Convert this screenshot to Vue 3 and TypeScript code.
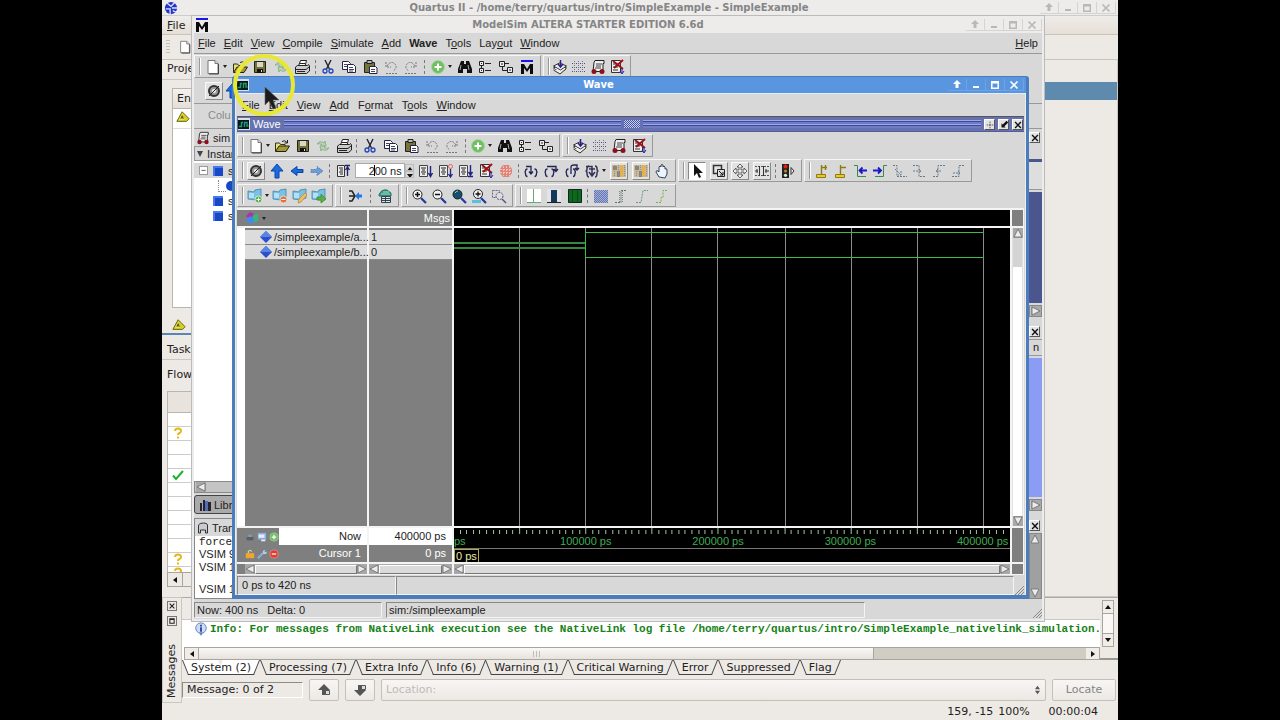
<script setup lang="ts">
interface Item {
  icon: string
  label?: string
  drop?: boolean
  raised?: boolean
  active?: boolean
}
interface Bar {
  width: number
  items: Item[]
}

const tool = (names: string): Item[] =>
  names.split(' ').map((name) => ({
    icon: name.replace(/[+^*]$/, ''),
    label: name.replace(/[+^*]$/, ''),
    drop: name.endsWith('+'),
    raised: name.endsWith('^'),
    active: name.endsWith('*'),
  }))

const standard = 'new+ open save refresh print | cut copy paste undo redo | add+ find collapse expand'
const compile = 'compile grid simulate stop'

const simBars: Bar[] = [
  { width: 347, items: tool(standard + ' modelsim') },
  { width: 88, items: tool(compile) },
]

const waveRows: Bar[][] = [
  [
    { width: 323, items: tool(standard) },
    { width: 91, items: tool(compile) },
  ],
  [
    {
      width: 439,
      items: tool('env^ up left right | restart field run runall runnext breakrun halt | stepin stepover stepout stepcur+ prof^ prof^ hand'),
    },
    { width: 124, items: tool('select* zoommode^ pan^ twocursor^ | traffic') },
    { width: 168, items: tool('cursoradd cursordel prevedge nextedge fallprev fallnext riseprev risenext') },
  ],
  [
    { width: 96, items: tool('groupadd+ groupdel groupedit groupgo') },
    { width: 64, items: tool('merge | export') },
    { width: 112, items: tool('zoomin zoomout zoomfull zoomcursor zoomrange') },
    { width: 161, items: tool('fmtline fmtbar fmtfull | hatch edgea edgeb edgec') },
  ],
]

const simMenu = ['File', 'Edit', 'View', 'Compile', 'Simulate', 'Add', 'Wave', 'Tools', 'Layout', 'Window']
const waveMenu = ['File', 'Edit', 'View', 'Add', 'Format', 'Tools', 'Window']
const underline: Record<string, number> = { Tools: 1, Format: 1, Layout: 3, Wave: -1 }
const split = (word: string): [string, string, string] => {
  const i = underline[word] ?? 0
  return i < 0 ? [word, '', ''] : [word.slice(0, i), word[i], word.slice(i + 1)]
}

const signals = [
  { name: '/simpleexample/a...', value: '1' },
  { name: '/simpleexample/b...', value: '0' },
]
const gridLines = Array.from({ length: 8 }, (_, i) => Math.round(66 * (i + 1) + i / 8))
const ticks = Array.from({ length: 84 }, (_, i) => ({ x: Math.round(6.61 * i) - 0.5, major: i % 10 === 0 }))
const times = ['100000 ps', '200000 ps', '300000 ps', '400000 ps']
const tabs = [
  'System (2)', 'Processing (7)', 'Extra Info', 'Info (6)', 'Warning (1)',
  'Critical Warning', 'Error', 'Suppressed', 'Flag',
]
const tasks = ['', 'ask', '', '', 'ok', '', '', '', '', '', 'ask', 'ask']
const winButtons = ['shade', 'min', 'max', 'close']
</script>

<template>
  <svg class="defs" aria-hidden="true">
    <defs>
      <symbol id="new" viewBox="0 0 16 16"><path d="M3 1.500h7l3 3v10H3z" fill="#fff" stroke="#777" /><path d="M10 1.500v3h3" fill="#ddd" stroke="#777" /><path d="M13.500 5v10H4" fill="none" stroke="#444" /></symbol>
      <symbol id="open" viewBox="0 0 16 16"><path d="M1.500 13V5h4l1 1.500H11V8" fill="#e8df80" stroke="#332" /><path d="M1.500 13.500L5 8h10.500L12 13.500z" fill="#a59a32" stroke="#221" /><path d="M8 3.500q3-2 5 1M13.500 2v3h-3" fill="none" stroke="#222" /></symbol>
      <symbol id="save" viewBox="0 0 16 16"><path d="M2.500 2.500h11v11h-11z" fill="#74743a" stroke="#221" /><path d="M5 3h6v5H5z" fill="#d8d8c8" /><path d="M5 10h6v4H5z" fill="#111" /><path d="M9 11h1v2H9z" fill="#ddd" /></symbol>
      <symbol id="refresh" viewBox="0 0 16 16"><path d="M2 6q3-4 7-1l1-2 1 5-5 0 1-1q-2-2-5-1z" fill="#b8d4b4" stroke="#8eb28c" /><path d="M14 10q-3 4-7 1l-1 2-1-5h5l-1 1q2 2 5 1z" fill="#b8d4b4" stroke="#8eb28c" /></symbol>
      <symbol id="print" viewBox="0 0 16 16"><path d="M4.500 7l2-5.500h6L11 7z" fill="#fff" stroke="#222" /><path d="M1.500 8l2-1.500h10l1-1 1 1.500v5l-3 2.500H1.500z" fill="#ccc" stroke="#222" /><path d="M2 10.500h10l3-2.500M6 4.500h5M3 12.500h8" fill="none" stroke="#222" /></symbol>
      <symbol id="cut" viewBox="0 0 16 16"><path d="M5 1l4.500 9M11 1L6.500 10" stroke="#223" stroke-width="1.400" fill="none" /><circle cx="5" cy="12" r="2" fill="none" stroke="#24b" stroke-width="1.300" /><circle cx="11" cy="12" r="2" fill="none" stroke="#24b" stroke-width="1.300" /></symbol>
      <symbol id="copy" viewBox="0 0 16 16"><path d="M1.500 2.500h6l2 2v6h-8z" fill="#fff" stroke="#224" /><path d="M6.500 5.500h6l2 2v6h-8z" fill="#fff" stroke="#224" /><path d="M3 5.500h3M3 7.500h3M8 8.500h4M8 10.500h5M8 12h4" stroke="#446" /></symbol>
      <symbol id="paste" viewBox="0 0 16 16"><path d="M2.500 3.500h10v10h-10z" fill="#77733a" stroke="#222" /><path d="M5 1.500h5v3H5z" fill="#bbb" stroke="#222" /><path d="M7.500 7.500h6l1.500 1.500v5.500H7.500z" fill="#fff" stroke="#224" /><path d="M9 10.500h4M9 12.500h4" stroke="#446" /></symbol>
      <symbol id="undo" viewBox="0 0 16 16"><path d="M3 3v5h5M4 7q4-6 8-2 3 4-2 7" fill="none" stroke="#777" stroke-dasharray="2 1" /><path d="M3 14.500h11" stroke="#777" stroke-dasharray="2 1" /></symbol>
      <symbol id="redo" viewBox="0 0 16 16"><path d="M13 3v5H8M12 7Q8 1 4 5q-3 4 2 7" fill="none" stroke="#777" stroke-dasharray="2 1" /><path d="M2 14.500h11" stroke="#777" stroke-dasharray="2 1" /></symbol>
      <symbol id="add" viewBox="0 0 16 16"><circle cx="8" cy="8" r="6.500" fill="#6fbf62" stroke="#a8d8a0" /><path d="M8 4.500v7M4.500 8h7" stroke="#fff" stroke-width="2" /></symbol>
      <symbol id="find" viewBox="0 0 16 16"><path d="M4 2h3v3h2V2h3l3 8v4h-5v-4H6v4H1v-4z" fill="#111" /><path d="M4 6l-1 5M11 6l1 5" stroke="#aaa" /></symbol>
      <symbol id="collapse" viewBox="0 0 16 16"><path d="M2.500 2.500h4v4h-4zM2.500 9.500h4v4h-4z" fill="#eee" stroke="#222" /><path d="M4 4.500h1M4 11.500h1M8 4.500h6M8 11.500h6M4.500 6v4" stroke="#222" /></symbol>
      <symbol id="expand" viewBox="0 0 16 16"><path d="M1.500 2.500h5v5h-5zM9.500 8.500h5v5h-5z" fill="#eee" stroke="#222" /><path d="M3 5h2M7 4.500h4M4.500 8v3.500H9M11 11h2" stroke="#222" fill="none" /></symbol>
      <symbol id="modelsim" viewBox="0 0 16 16"><path d="M2 1h12v2H2z" fill="#1616e8" /><path d="M2 5h3l3 5 3-5h3v10h-3V9l-3 4-3-4v6H2z" fill="#0a0a0a" /></symbol>
      <symbol id="compile" viewBox="0 0 16 16"><path d="M1.500 9l6-3 7 3-6 5z" fill="#fff" stroke="#333" /><path d="M1.500 7l6-3 7 3-6 4zM1.500 11l6.500 4 6-5" fill="#eee" stroke="#333" /><path d="M8.500 1v6M6 5l2.500 3L11 5" fill="none" stroke="#228" stroke-width="1.500" /></symbol>
      <symbol id="grid" viewBox="0 0 16 16"><path d="M1 4.500h14M1 8.500h14M1 12.500h14" stroke="#44a" stroke-dasharray="1 1" /><path d="M3.500 2v12M7.500 2v12M11.500 2v12" stroke="#777" stroke-dasharray="1 1" /></symbol>
      <symbol id="simulate" viewBox="0 0 16 16"><path d="M5 1.500h9v3h-1v8H3l1-9z" fill="#eee" stroke="#222" /><path d="M6 5h6M6 7h5M5 9h6" stroke="#444" /><circle cx="4" cy="12.500" r="2.500" fill="#8a1220" /><circle cx="12" cy="12.500" r="2.500" fill="#8a1220" /></symbol>
      <symbol id="stop" viewBox="0 0 16 16"><path d="M2.500 1.500h9v12h-9z" fill="#eee" stroke="#333" /><path d="M4 5h5M4 8h5M4 11h5" stroke="#333" /><path d="M4 2l10 8M14 1L5 9" stroke="#a01018" stroke-width="2" /><path d="M13 9v5M11 12l2 3 2-3" stroke="#22a" fill="none" /></symbol>
      <symbol id="env" viewBox="0 0 16 16"><circle cx="8" cy="8" r="5" fill="#999" stroke="#333" stroke-width="2" /><circle cx="8" cy="8" r="2" fill="#eee" /><path d="M3 13L13 3" stroke="#222" /></symbol>
      <symbol id="up" viewBox="0 0 16 16"><path d="M8 1l6 7h-4v7H6V8H2z" fill="#1a6ae0" stroke="#0b45a8" /></symbol>
      <symbol id="left" viewBox="0 0 16 16"><path d="M2 8l6-4.500v3h6v3H8v3z" fill="#1a6ae0" stroke="#0b45a8" /></symbol>
      <symbol id="right" viewBox="0 0 16 16"><path d="M14 8L8 3.500v3H2v3h6v3z" fill="#6b9ed6" stroke="#5580ba" stroke-dasharray="2 1" /></symbol>
      <symbol id="restart" viewBox="0 0 16 16"><path d="M2.500 2.500h7v11h-7z" fill="#eee" stroke="#333" /><path d="M4 5h4M5 7h3M4 9h4M5 11h3" stroke="#222" /><path d="M10 2.500h5M12.500 13V4M10.500 7l2-3 2 3" fill="none" stroke="#226" stroke-width="1.300" /></symbol>
      <symbol id="run" viewBox="0 0 16 16"><path d="M1.500 2.500h8v11h-8z" fill="#eee" stroke="#444" /><path d="M3 5h5M4 7h3M3 9h5M4 11h3" stroke="#222" /><path d="M12.500 3v10M10.500 10l2 3.500 2-3.500" fill="none" stroke="#228" stroke-width="1.400" /></symbol>
      <symbol id="runall" viewBox="0 0 16 16"><path d="M1.500 2.500h8v11h-8z" fill="#eee" stroke="#444" /><path d="M3 5h5M4 7h3M3 9h5M4 11h3" stroke="#222" /><path d="M12.500 6v8M10.500 11l2 3 2-3" fill="none" stroke="#228" stroke-width="1.300" /><circle cx="12.500" cy="3.500" r="2" fill="none" stroke="#d66" /></symbol>
      <symbol id="runnext" viewBox="0 0 16 16"><path d="M1.500 2.500h8v11h-8z" fill="#eee" stroke="#444" /><path d="M3 5h5M4 7h3M3 9h5M4 11h3" stroke="#222" /><path d="M12.500 2v9M10.500 9l2 3 2-3M10 13.500h5" fill="none" stroke="#228" stroke-width="1.400" /></symbol>
      <symbol id="breakrun" viewBox="0 0 16 16"><path d="M2.500 1.500h9v12h-9z" fill="#eee" stroke="#333" /><path d="M4 5h5M4 8h5M4 11h5" stroke="#333" /><path d="M4 2l10 8M14 1L5 9" stroke="#a01018" stroke-width="2" /><path d="M13 9v5M11 12l2 3 2-3" stroke="#22a" fill="none" /></symbol>
      <symbol id="halt" viewBox="0 0 16 16"><path d="M5 2h6l3 4v4l-3 4H5l-3-4V6z" fill="#e08478" /><path d="M2 6.500h12M2 9.500h12M5.500 3v10M8.500 3v10M11.500 3v10" stroke="#f4c4bc" stroke-dasharray="2 1" /></symbol>
      <symbol id="stepin" viewBox="0 0 16 16"><path d="M4.500 6q-2 0-2 2 0 1-1 1 1 0 1 1.500 0 3 2 3M11.500 6q2 0 2 2 0 1 1 1-1 0-1 1.500 0 3-2 3M3 3.500h5V11M6 8.500L8 11l2-2.500" fill="none" stroke="#225" stroke-width="1.300" /></symbol>
      <symbol id="stepover" viewBox="0 0 16 16"><path d="M4.500 6q-2 0-2 2 0 1-1 1 1 0 1 1.500 0 3 2 3M8.500 6q2 0 2 2 0 1 1 1-1 0-1 1.500 0 3-2 3M4 3.500h9V8M11 6l2 2.500L15 6" fill="none" stroke="#225" stroke-width="1.300" /></symbol>
      <symbol id="stepout" viewBox="0 0 16 16"><path d="M4.500 6q-2 0-2 2 0 1-1 1 1 0 1 1.500 0 3 2 3M9 6q2 0 2 2 0 1 1 1-1 0-1 1.500 0 3-2 3M7 11V4q0-2 3-2h3v4M11 5l2 2 2-2" fill="none" stroke="#225" stroke-width="1.300" /></symbol>
      <symbol id="stepcur" viewBox="0 0 16 16"><path d="M5 3q-2 0-2 3 0 2-1.500 2 1.500 0 1.500 2 0 4 2 4M11 3q2 0 2 3 0 2 1.500 2-1.500 0-1.500 2 0 4-2 4M2 3.500h6V12M5 9l3 4 3-4M5 6h6" fill="none" stroke="#335" stroke-width="1.500" /></symbol>
      <symbol id="prof" viewBox="0 0 16 16"><path d="M1 2h14v12H1z" fill="#c8b998" /><path d="M2 3h4v4H2zM6 8h3v6H6z" fill="#8a8475" /><path d="M9 2h3v12H9z" fill="#e8b048" /><path d="M3.500 2v12M7.500 2v12M13.500 2v12" stroke="#8d8d98" stroke-dasharray="1 1" /></symbol>
      <symbol id="hand" viewBox="0 0 16 16"><path d="M5 14L2 9q0-2 2-1l1 1V4q1-2 2 0V2q1-1 2 0v2q1-2 2 0v2q2-1 2 1v4l-2 4z" fill="#eef4ff" stroke="#345" /></symbol>
      <symbol id="select" viewBox="0 0 16 16"><path d="M5 1v12l3-3 2 5 2-1-2-4h4z" fill="#111" /></symbol>
      <symbol id="zoommode" viewBox="0 0 16 16"><path d="M2.500 2.500h8v8h-8z" fill="none" stroke="#333" stroke-width="1.500" /><path d="M6.500 6.500h7v7h-7z" fill="#ddd" stroke="#222" /><path d="M8 8l4 4M12 9v3H9" stroke="#111" fill="none" /></symbol>
      <symbol id="pan" viewBox="0 0 16 16"><path d="M8 1l3 3H9v3h3V5l3 3-3 3V9H9v3h2l-3 3-3-3h2V9H4v2L1 8l3-3v2h3V4H5z" fill="#eee" stroke="#444" stroke-width=".8" /></symbol>
      <symbol id="twocursor" viewBox="0 0 16 16"><path d="M1 3.500h14M1 12.500h14" stroke="#555" stroke-dasharray="2 1" /><path d="M5.500 3v10M9.500 3v10M1 8h3M11 8h4M3 6v4M12 6v4" stroke="#333" fill="none" /></symbol>
      <symbol id="traffic" viewBox="0 0 16 16"><path d="M2 1h7v14H2z" fill="#222" /><circle cx="5.500" cy="3.500" r="2" fill="#f01818" /><circle cx="5.500" cy="8" r="1.500" fill="#b09018" /><circle cx="5.500" cy="12.300" r="1.600" fill="#d8f0d8" /><path d="M11 4.500l3 3.500-3 3.500z" fill="#eee" stroke="#333" /></symbol>
      <symbol id="cursoradd" viewBox="0 0 16 16"><path d="M7.500 2v9M7 4.500h6M11.500 2v5" fill="none" stroke="#8f7a10" stroke-width="1.400" /><path d="M2.500 11.500h9v3h-9z" fill="#ecc830" stroke="#8f7a10" /></symbol>
      <symbol id="cursordel" viewBox="0 0 16 16"><path d="M7.500 2v9M8 4.500h5" fill="none" stroke="#8f7a10" stroke-width="1.400" /><path d="M2.500 11.500h9v3h-9z" fill="#ecc830" stroke="#8f7a10" /></symbol>
      <symbol id="prevedge" viewBox="0 0 16 16"><path d="M1 2.500h3.500v11H13" fill="none" stroke="#3a8a4a" /><path d="M6 7.500h8M9.500 4.500l-3 3 3 3" fill="none" stroke="#1818c8" stroke-width="1.800" /></symbol>
      <symbol id="nextedge" viewBox="0 0 16 16"><path d="M15 2.500h-3.500v11H3" fill="none" stroke="#3a8a4a" /><path d="M1 7.500h8M6 4.500l3 3-3 3" fill="none" stroke="#1818c8" stroke-width="1.800" /></symbol>
      <symbol id="fallprev" viewBox="0 0 16 16"><path d="M1 2.500h4v11h10M3 6l6 6M9 8v4H6" fill="none" stroke="#667a88" stroke-dasharray="2 1" /></symbol>
      <symbol id="fallnext" viewBox="0 0 16 16"><path d="M2 2.500h6v11h7M2 8h8M8 6l2 2-2 2" fill="none" stroke="#667a88" stroke-dasharray="2 1" /></symbol>
      <symbol id="riseprev" viewBox="0 0 16 16"><path d="M2 13.500h5v-11h7M5 8h6M7 6L5 8l2 2" fill="none" stroke="#667a88" stroke-dasharray="2 1" /></symbol>
      <symbol id="risenext" viewBox="0 0 16 16"><path d="M2 13.500h7v-11h5M3 10h7M8 8l2 2-2 2" fill="none" stroke="#667a88" stroke-dasharray="2 1" /></symbol>
      <symbol id="folder" viewBox="0 0 16 16"><path d="M1 3l6 1 1-2 6-1v9l-5 2-8-1z" fill="#7cc0e4" stroke="#3a86b4" stroke-width=".8" /><path d="M2 5h5v5H2z" fill="#b4e0f4" /></symbol>
      <symbol id="groupadd" viewBox="0 0 16 16"><use href="#folder" /><circle cx="11.500" cy="11.500" r="3.500" fill="#58b04a" stroke="#e8f4e4" stroke-width=".8" /><path d="M11.500 9.500v4M9.500 11.500h4" stroke="#fff" /></symbol>
      <symbol id="groupdel" viewBox="0 0 16 16"><use href="#folder" /><circle cx="11.500" cy="11.500" r="3.500" fill="#e0713c" stroke="#f4e4e0" stroke-width=".8" /><path d="M9.500 11.500h4" stroke="#fff" /></symbol>
      <symbol id="groupedit" viewBox="0 0 16 16"><use href="#folder" /><path d="M6 15l1-4 6-6 2 2-6 7z" fill="#f0c060" stroke="#b98a3c" stroke-width=".8" /></symbol>
      <symbol id="groupgo" viewBox="0 0 16 16"><use href="#folder" /><path d="M6 9h4V6l5 5-5 4v-3H6z" fill="#58b04a" stroke="#3c8a30" stroke-width=".8" /></symbol>
      <symbol id="merge" viewBox="0 0 16 16"><path d="M2 3h3l3 5-3 5H2M2 8h5" fill="none" stroke="#222" stroke-width="1.500" /><path d="M8 8l4-4v2.500h3v3h-3V12z" fill="#2476e4" /></symbol>
      <symbol id="export" viewBox="0 0 16 16"><path d="M2 7q2-6 8-5l4 3v3H2z" fill="#3d9b8c" stroke="#2b6f66" /><path d="M4 6h9M6 4h6" stroke="#a0d8c8" /><path d="M4.500 8.500h9v6h-9z" fill="#dfe8e8" stroke="#344" /><path d="M5 10.500h9M5 12.500h9M8.500 8v6" stroke="#345" /></symbol>
      <symbol id="zoomin" viewBox="0 0 16 16"><path d="M10 10l5 5" stroke="#2438a0" stroke-width="2.200" /><circle cx="6.500" cy="6.500" r="4.500" fill="#f2f2f2" stroke="#222" /><path d="M4 6.500h5M6.500 4v5" stroke="#111" stroke-width="1.500" /></symbol>
      <symbol id="zoomout" viewBox="0 0 16 16"><path d="M10 10l5 5" stroke="#2438a0" stroke-width="2.200" /><circle cx="6.500" cy="6.500" r="4.500" fill="#f2f2f2" stroke="#222" /><path d="M4 6.500h5" stroke="#111" stroke-width="1.500" /></symbol>
      <symbol id="zoomfull" viewBox="0 0 16 16"><path d="M10 10l5 5" stroke="#2438a0" stroke-width="2.200" /><circle cx="6.500" cy="6.500" r="4.500" fill="#17506c" stroke="#122" /><path d="M4 5q1-2 3-2" stroke="#9cd" fill="none" /></symbol>
      <symbol id="zoomcursor" viewBox="0 0 16 16"><path d="M1 13.500h9" stroke="#5ac0e0" stroke-width="3" /><path d="M10 10l5 5" stroke="#2438a0" stroke-width="2.200" /><circle cx="7" cy="6" r="4.500" fill="#f2f2f2" stroke="#222" /><path d="M4.500 6h5M7 3.500v5" stroke="#111" stroke-width="1.300" /></symbol>
      <symbol id="zoomrange" viewBox="0 0 16 16"><path d="M1.500 2.500h7v7h-7z" fill="none" stroke="#668" stroke-dasharray="2 1" /><circle cx="8.500" cy="8" r="3.500" fill="#ddd" stroke="#557" stroke-dasharray="2 1" /><path d="M11 11l4 4" stroke="#557" stroke-width="1.500" /></symbol>
      <symbol id="fmtline" viewBox="0 0 16 16"><path d="M1 1h14v14H1z" fill="#fff" /><path d="M1 14.500h14M7.500 1v13" stroke="#69a878" /></symbol>
      <symbol id="fmtbar" viewBox="0 0 16 16"><path d="M1 1h14v14H1z" fill="#e4e4e8" /><path d="M5 2h6v12H5z" fill="#14385c" /><path d="M1 14.500h14" stroke="#222" /></symbol>
      <symbol id="fmtfull" viewBox="0 0 16 16"><path d="M1.500 1.500h13v13h-13z" fill="#0d6a1c" stroke="#123" /><path d="M5.500 2v12M10.500 2v12" stroke="#084a10" /></symbol>
      <pattern id="dots" width="2" height="2" patternUnits="userSpaceOnUse"><path d="M0 0h1v1H0zM1 1h1v1H1z" fill="#6478b4" /></pattern>
      <symbol id="hatch" viewBox="0 0 16 16"><path d="M1 2h14v13H1z" fill="#a4aed4" /><path d="M1 2h14v13H1z" fill="url(#dots)" /></symbol>
      <symbol id="edgea" viewBox="0 0 16 16"><path d="M2 14.500h6v-12h5" fill="none" stroke="#567a60" stroke-dasharray="2 1" /><path d="M6.500 3v11M9.500 3v11" stroke="#888" stroke-dasharray="1 1" /></symbol>
      <symbol id="edgeb" viewBox="0 0 16 16"><path d="M2 14.500h5l2-12h5" fill="none" stroke="#6a9a7a" stroke-dasharray="2 1" /></symbol>
      <symbol id="edgec" viewBox="0 0 16 16"><path d="M2 14.500h5v-5h2v-7h5" fill="none" stroke="#7ab040" stroke-dasharray="2 1" /></symbol>
      <symbol id="shade" viewBox="0 0 12 12"><path d="M6 1l4 4H7.500v4h-3V5H2z" fill="currentColor" /></symbol>
      <symbol id="min" viewBox="0 0 12 12"><path d="M3 7h6v2H3z" fill="currentColor" /></symbol>
      <symbol id="max" viewBox="0 0 12 12"><path d="M2 2h8v8H2zM3.500 4.500v4h5v-4z" fill="currentColor" fill-rule="evenodd" /></symbol>
      <symbol id="close" viewBox="0 0 12 12"><path d="M2.500 2.500l7 7M9.500 2.500l-7 7" stroke="currentColor" stroke-width="1.700" /></symbol>
      <symbol id="dock" viewBox="0 0 12 12"><path d="M3 9V4l1.500 1.500L9 1l2 2-4.500 4.500L8 9z" fill="#111" /></symbol>
      <symbol id="plus" viewBox="0 0 12 12"><path d="M6 2v8M2 6h8" stroke="#444" stroke-dasharray="2 1" /></symbol>
      <symbol id="waveapp" viewBox="0 0 12 12"><path d="M0 0h12v12H0z" fill="#dde" /><path d="M0 2h11v9H0z" fill="#061a16" /><path d="M1 8.500h2.500v-4H5M6.500 9V4.500H9V8h1.500" fill="none" stroke="#1e9a74" stroke-width="1.400" /></symbol>
      <symbol id="warn" viewBox="0 0 16 16"><path d="M7 2L1 13h11l3-3z" fill="#d8d020" stroke="#5c5810" /><path d="M7 4.500L3.500 11h6z" fill="#f0ec48" /><path d="M5.500 10L7 6.500l1.500 3.500M6 9h2" fill="none" stroke="#333" stroke-width=".9" /></symbol>
      <symbol id="ask" viewBox="0 0 12 12"><path d="M3 4q0-2.500 3-2.500T9 4q0 1.500-1.500 2T6 8" fill="none" stroke="#e4b818" stroke-width="2" /><path d="M5 9.500h2v2H5z" fill="#e4b818" /></symbol>
      <symbol id="ok" viewBox="0 0 12 12"><path d="M1 6.500l3 3.500 7-8" fill="none" stroke="#22b030" stroke-width="2" /></symbol>
      <symbol id="info" viewBox="0 0 16 16"><circle cx="8" cy="7" r="6" fill="#cfdcf2" stroke="#5878b8" /><path d="M6 12l2 4 2-4z" fill="#5878b8" /><path d="M7 6h2v5H7zM7 3h2v2H7z" fill="#1c3f98" /></symbol>
      <symbol id="diamond" viewBox="0 0 12 12"><path d="M6 0l6 6-6 6-6-6z" fill="#2a50cc" /><path d="M6 0l6 6H0z" fill="#5b82e4" /></symbol>
      <symbol id="cubes" viewBox="0 0 14 12"><path d="M1 4l4-4 4 2-4 6z" fill="#b030a8" /><path d="M8 3l5-1v7l-5 1z" fill="#38b878" /><path d="M5 4l5 4-4 4-5-4z" fill="#3a8cf4" /></symbol>
      <symbol id="lib" viewBox="0 0 12 12"><path d="M1 4h2v8H1zM4 1h2v11H4zM9 3h3v9H9z" fill="#223" /><path d="M6 2h3v10H6z" fill="#556cb0" /></symbol>
      <symbol id="transcript" viewBox="0 0 12 12"><path d="M1.500 11V3q1-2 5-2t4 2v8h-2V8h-5v3z" fill="#c8ccd0" stroke="#333" /></symbol>
      <symbol id="sq" viewBox="0 0 10 10"><path d="M0 0h10v10H0z" fill="#1748c8" /><path d="M0 0h10v2H2v8H0z" fill="#4a78ea" /></symbol>
      <symbol id="quartus" viewBox="0 0 16 16"><circle cx="8" cy="8" r="7" fill="#2334c8" /><path d="M3 2l5 4 5-5M2 9h5v6M9 8h6M10 11l4 2" fill="none" stroke="#dfe2f8" stroke-width="1.500" /></symbol>
      <symbol id="snap" viewBox="0 0 12 12"><path d="M2 6h8v4H2z" fill="#55606c" /><path d="M4 3h4v3H4z" fill="#8b98a8" /></symbol>
      <symbol id="screen" viewBox="0 0 12 12"><path d="M1 1h10v8H1z" fill="#8cb0e4" /><path d="M2 3h7v4H2zM5 9h5v2H5z" fill="#e8f0fc" /></symbol>
      <symbol id="lock" viewBox="0 0 12 12"><path d="M4 5V3q2-3 4 0" fill="none" stroke="#e8d8a0" stroke-width="1.400" /><path d="M1 5h10v6H1z" fill="#f0a828" /></symbol>
      <symbol id="wrench" viewBox="0 0 12 12"><path d="M1 11l6-6" stroke="#88aee4" stroke-width="2.500" /><path d="M7 2l3-1-1 2 1 1 2-1-1 3-4 0z" fill="#b4ccf0" /></symbol>
      <symbol id="minus" viewBox="0 0 16 16"><circle cx="8" cy="8" r="6.500" fill="#e03c34" stroke="#f09890" /><path d="M4.500 8h7" stroke="#fff" stroke-width="2" /></symbol>
      <symbol id="tri" viewBox="0 0 10 10"><path d="M0 0h10v10H0z" fill="#a8a8a8" /><path d="M9 1v8L1 5z" fill="#ececec" stroke="#666" stroke-width=".8" /></symbol>
      <symbol id="tinytri" viewBox="0 0 8 8"><path d="M6 1v6L2 4z" fill="#111" /></symbol>
      <symbol id="grip" viewBox="0 0 10 10"><path d="M1 10l9-9M4 10l6-6M7 10l3-3" stroke="#888" /></symbol>
      <symbol id="arrowmsg" viewBox="0 0 16 16"><path d="M8 2l6 6h-3v5h-5V8H2z" fill="#555" /><path d="M9.500 8.500h4v4h-4z" fill="#ddd" stroke="#555" /></symbol>
    </defs>
  </svg>

  <main class="desktop">
    <div class="screen">
      <section class="quartus">
        <header class="title pale">
          <svg class="i14"><use href="#quartus" /></svg>
          <h1>Quartus II - /home/terry/quartus/intro/SimpleExample - SimpleExample</h1>
          <span class="winbtns">
            <button v-for="b in winButtons" :key="b" :aria-label="b"><svg class="i12"><use :href="'#' + b" /></svg></button>
          </span>
        </header>
        <nav class="qmenu"><button><u>F</u>ile</button></nav>
        <div class="qtools"><i class="handle"></i><button aria-label="new file"><svg class="i14"><use href="#new" /></svg></button></div>
        <div class="qmain">
          <aside class="qleft">
            <h2>Proje</h2>
            <div class="entity">
              <div class="enthead">En</div>
              <div class="entrow"><svg class="i14"><use href="#warn" /></svg></div>
              <div class="entbody"></div>
            </div>
            <div class="hier"><svg class="i14"><use href="#warn" /></svg></div>
            <h2 class="tasktitle">Task</h2>
            <div class="flow">Flow</div>
            <div class="tasks">
              <div class="taskhead"></div>
              <div v-for="(t, i) in tasks" :key="i" class="task"><svg v-if="t" class="i12"><use :href="'#' + t" /></svg></div>
            </div>
            <div class="qscroll"><button aria-label="scroll left"><svg class="i8"><use href="#tinytri" /></svg></button></div>
          </aside>
          <div class="qright"><div class="qband"></div></div>
        </div>
        <section class="messages">
          <aside class="msgside">
            <button aria-label="close messages"><svg class="i8"><use href="#close" /></svg></button>
            <button aria-label="float messages"><svg class="i8"><use href="#max" /></svg></button>
            <span>Messages</span>
          </aside>
          <div class="msgmain">
            <div class="msgbox">
              <div class="msghead"></div>
              <div class="msgview">
                <div class="msgtext"><i class="branch"></i><svg class="i14"><use href="#info" /></svg><code>Info: For messages from NativeLink execution see the NativeLink log file /home/terry/quartus/intro/SimpleExample_nativelink_simulation.</code></div>
                <div class="hbar">
                  <button aria-label="scroll left"><svg class="i8"><use href="#tinytri" /></svg></button>
                  <div class="thumb"><i></i></div><div class="trough"></div>
                  <button aria-label="scroll right"><svg class="i8 flip"><use href="#tinytri" /></svg></button>
                </div>
              </div>
              <div class="vbar">
                <button aria-label="scroll up"><svg class="i8 r90"><use href="#tinytri" /></svg></button>
                <div class="vthumb"></div>
                <button aria-label="scroll down"><svg class="i8 r270"><use href="#tinytri" /></svg></button>
              </div>
            </div>
            <div class="tabs" role="tablist">
              <button v-for="(t, i) in tabs" :key="t" role="tab" :class="{ on: i === 0 }"><span>{{ t }}</span></button>
            </div>
            <div class="msgctl">
              <output>Message: 0 of 2</output>
              <button class="soft" aria-label="previous message"><svg class="i16"><use href="#arrowmsg" /></svg></button>
              <button class="soft" aria-label="next message"><svg class="i16 upside"><use href="#arrowmsg" /></svg></button>
              <div class="combo">
                <select aria-label="Location" disabled><option>Location:</option></select>
                <svg class="updown" viewBox="0 0 8 12"><path d="M1 5l3-4 3 4zM1 7l3 4 3-4z" fill="#555" /></svg>
              </div>
              <button class="soft locate">Locate</button>
            </div>
          </div>
        </section>
        <footer class="qstatus"><span>159, -15</span><span class="pct">100%</span><span class="clock">00:00:04</span></footer>
      </section>

      <section class="sim">
        <header class="title pale">
          <svg class="i16"><use href="#modelsim" /></svg>
          <h2>ModelSim ALTERA STARTER EDITION 6.6d</h2>
          <span class="winbtns"><button v-for="b in winButtons" :key="b" :aria-label="b"><svg class="i12"><use :href="'#' + b" /></svg></button></span>
        </header>
        <nav class="menu simmenu">
          <button v-for="m in simMenu" :key="m" :class="{ bold: m === 'Wave' }">{{ split(m)[0] }}<u>{{ split(m)[1] }}</u>{{ split(m)[2] }}</button>
          <button class="help"><u>H</u>elp</button>
        </nav>
        <div class="barrow simrow">
          <div v-for="(bar, k) in simBars" :key="k" class="bar" :style="{ width: bar.width + 'px' }">
            <template v-for="(it, j) in bar.items" :key="j">
              <i v-if="it.icon === '|'" class="sep"></i>
              <button v-else class="tool" :aria-label="it.label"><svg class="i16"><use :href="'#' + it.icon" /></svg><i v-if="it.drop" class="drop"></i></button>
            </template>
          </div>
        </div>
        <div class="simsecond"><button class="tool raised" aria-label="environment"><svg class="i16"><use href="#env" /></svg></button><button class="tool" aria-label="up"><svg class="i16"><use href="#up" /></svg></button></div>
        <div class="simthird">Colu</div>
        <div class="simbody">
          <aside class="simleft">
            <div class="panetitle"><svg class="i14"><use href="#simulate" /></svg>sim</div>
            <div class="inst"><span class="caret"></span><b>Instar</b></div>
            <div class="tree">
              <div class="node lit"><i class="fold">−</i><svg class="i10"><use href="#sq" /></svg><span>s</span></div>
              <div class="node sub"><i class="elbow"></i><i class="ball"></i></div>
              <div class="node deep"><svg class="i10"><use href="#sq" /></svg><span>s</span></div>
              <div class="node deep"><svg class="i10"><use href="#sq" /></svg><span>s</span></div>
            </div>
            <div class="mscroll"><svg class="i10"><use href="#tri" /></svg></div>
            <div class="libtab"><svg class="i12"><use href="#lib" /></svg>Libr</div>
            <div class="trans">
              <div class="panetitle"><svg class="i12"><use href="#transcript" /></svg>Tran</div>
              <div class="log"><code>force</code><span>VSIM 9</span><span>VSIM 1</span><span class="last">VSIM 1</span></div>
            </div>
          </aside>
          <aside class="simright">
            <button class="x" aria-label="close pane"><svg class="i10"><use href="#close" /></svg></button>
            <div class="strip"></div>
            <div class="navy"></div>
            <div class="mscroll"><svg class="i10 flip"><use href="#tri" /></svg></div>
            <button class="x" aria-label="close objects"><svg class="i10"><use href="#close" /></svg></button>
            <div class="n">n</div>
            <div class="peri"></div>
            <div class="mscroll"><svg class="i10 flip"><use href="#tri" /></svg></div>
            <button class="x" aria-label="close transcript"><svg class="i10"><use href="#close" /></svg></button>
            <div class="vmotif"><svg class="i10 r90"><use href="#tri" /></svg><svg class="i10 r270"><use href="#tri" /></svg></div>
          </aside>
        </div>
        <footer class="simstatus"><span class="cell now">Now: 400 ns&nbsp;&nbsp; Delta: 0</span><span class="cell path">sim:/simpleexample</span><svg class="i10"><use href="#grip" /></svg></footer>
      </section>

      <section class="wave">
        <header class="title blue">
          <svg class="i12"><use href="#waveapp" /></svg>
          <h2>Wave</h2>
          <span class="winbtns"><button v-for="b in winButtons" :key="b" :aria-label="b"><svg class="i12"><use :href="'#' + b" /></svg></button></span>
        </header>
        <div class="waveinner">
          <nav class="menu wavemenu">
            <button v-for="m in waveMenu" :key="m">{{ split(m)[0] }}<u>{{ split(m)[1] }}</u>{{ split(m)[2] }}</button>
          </nav>
          <div class="panebar">
            <svg class="i12"><use href="#waveapp" /></svg><span>Wave</span>
            <i class="stripes"></i><i class="knurl"></i><i class="stripes"></i>
            <button class="x" aria-label="zoom pane"><svg class="i10"><use href="#plus" /></svg></button>
            <button class="x" aria-label="dock pane"><svg class="i10"><use href="#dock" /></svg></button>
            <button class="x" aria-label="close pane"><svg class="i10"><use href="#close" /></svg></button>
          </div>
          <div class="rows">
            <div v-for="(row, r) in waveRows" :key="r" class="barrow">
              <div v-for="(bar, k) in row" :key="k" class="bar" :style="{ width: bar.width + 'px' }">
                <template v-for="(it, j) in bar.items" :key="j">
                  <i v-if="it.icon === '|'" class="sep"></i>
                  <span v-else-if="it.icon === 'field'" class="field">
                    <input type="text" value="200 ns" aria-label="Run length" />
                    <span class="spin"><button aria-label="increase"><svg class="i8 r90"><use href="#tinytri" /></svg></button><button aria-label="decrease"><svg class="i8 r270"><use href="#tinytri" /></svg></button></span>
                  </span>
                  <button v-else class="tool" :class="{ raised: it.raised, active: it.active }" :aria-label="it.label"><svg class="i16"><use :href="'#' + it.icon" /></svg><i v-if="it.drop" class="drop"></i></button>
                </template>
              </div>
            </div>
          </div>

          <div class="pane">
            <div class="gray head"><svg class="cubes"><use href="#cubes" /></svg><i class="drop"></i></div>
            <div class="gray head end">Msgs</div>
            <div class="black"></div>
            <div class="gray"></div>

            <div class="gray names"><div v-for="s in signals" :key="s.name" class="sig"><svg class="i12"><use href="#diamond" /></svg>{{ s.name }}</div></div>
            <div class="gray vals"><div v-for="s in signals" :key="s.name" class="sig">{{ s.value }}</div></div>
            <div class="black plot">
              <svg viewBox="0 0 555 298" preserveAspectRatio="none" shape-rendering="crispEdges" role="img" aria-label="waveforms">
                <path v-for="x in gridLines" :key="x" :d="`M${x - 0.5} 0V298`" stroke="#8c8c8c" />
                <path d="M0 14.500H131M0 19.500H131" stroke="#3a8640" stroke-width="2" />
                <path d="M528 4.500H131.500V29.500H528" stroke="#34c048" fill="none" />
              </svg>
            </div>
            <div class="vmotif wide"><svg class="i10 r90"><use href="#tri" /></svg><i></i><svg class="i10 r270"><use href="#tri" /></svg></div>

            <div class="gray foot">
              <div class="frow"><span class="ficons"><svg class="i10"><use href="#snap" /></svg><svg class="i10"><use href="#screen" /></svg><svg class="i10"><use href="#add" /></svg></span><span class="white">Now</span></div>
              <div class="frow"><span class="ficons"><svg class="i10"><use href="#lock" /></svg><svg class="i10"><use href="#wrench" /></svg><svg class="i10"><use href="#minus" /></svg></span><span>Cursor 1</span></div>
            </div>
            <div class="gray foot"><div class="frow"><span class="white">400000 ps</span></div><div class="frow"><span>0 ps</span></div></div>
            <div class="black foot ruler">
              <svg viewBox="0 0 555 6" preserveAspectRatio="none" aria-hidden="true"><path v-for="t in ticks" :key="t.x" :d="t.major ? `M${t.x} 0V6` : `M${t.x} 2V6`" stroke="#9cc8a0" /></svg>
              <div class="times"><span class="origin">ps</span><span v-for="t in times" :key="t">{{ t }}</span></div>
              <div class="cursorrow"><span>0 ps</span></div>
            </div>
            <div class="gray"></div>

            <div class="hmotif first"><svg class="i10"><use href="#tri" /></svg><i></i><svg class="i10 flip"><use href="#tri" /></svg></div>
            <div class="hmotif"><svg class="i10"><use href="#tri" /></svg><i></i><svg class="i10 flip"><use href="#tri" /></svg></div>
            <div class="hmotif"><svg class="i10"><use href="#tri" /></svg><i></i><svg class="i10 flip"><use href="#tri" /></svg></div>
            <div class="gray"></div>
          </div>
          <footer class="wavestatus"><span class="range">0 ps to 420 ns</span><span class="rest"></span><svg class="i10"><use href="#grip" /></svg></footer>
        </div>
      </section>

      <svg class="pointer" viewBox="0 0 64 64" aria-hidden="true">
        <circle cx="32" cy="32" r="29" fill="none" stroke="#e8e834" stroke-width="4" />
        <path d="M33 34v18l4-4 4 8 3-1-3-8h6z" fill="#1c1c1c" stroke="#666" stroke-width=".6" />
      </svg>
    </div>
  </main>
</template>

<style>
html, body, #app { height: 100%; margin: 0; background: #000; }
</style>

<style scoped>
* { box-sizing: border-box; }
button, input, select { font: inherit; color: inherit; margin: 0; padding: 0; border: 0; background: none; border-radius: 0; white-space: nowrap; }
h1, h2 { margin: 0; font-size: inherit; }
svg { display: block; flex: none; }
.defs { position: absolute; width: 0; height: 0; }
.i8 { width: 8px; height: 8px; }
.i10 { width: 10px; height: 10px; }
.i12 { width: 12px; height: 12px; }
.i14 { width: 14px; height: 14px; }
.i16 { width: 16px; height: 16px; }
.flip { transform: scaleX(-1); }
.upside { transform: scaleY(-1); }
.r90 { transform: rotate(90deg); }
.r270 { transform: rotate(270deg); }
.desktop { display: grid; grid-template-columns: 162fr 956fr 162fr; min-height: 100%; background: #000; }
.screen { grid-column: 2; position: relative; min-height: 720px; display: flex; overflow: hidden; font: 11px/14px "DejaVu Sans", sans-serif; color: #222; }

.title { display: flex; align-items: center; height: 16px; font: bold 10px/14px "DejaVu Sans", sans-serif; }
.title h1, .title h2 { flex: 1; text-align: center; white-space: nowrap; overflow: hidden; }
.pale { background: #edeceb; color: #858585; }
.winbtns { display: flex; color: #b8b8b8; }
.winbtns button { width: 19px; height: 12px; display: grid; place-items: center; border: solid #d6d4d2; border-width: 0 1px 1px 0; }

.quartus { flex: 1; min-width: 0; display: flex; flex-direction: column; background: #ede9e5; }
.quartus > .title { padding: 0 2px; height: 15px; }
.qmenu { height: 20px; padding: 3px 5px; border-top: 1px solid #d0ccc8; background: linear-gradient(#efece9, #e6dfd7); border-bottom: 1px solid #c9c3bb; }
.qtools { height: 25px; display: flex; align-items: center; gap: 8px; padding-left: 4px; border-bottom: 1px solid #c9c3bb; }
.handle { width: 4px; height: 14px; background: repeating-linear-gradient(#c4bfb9 0 1px, transparent 1px 3px); }
.qmain { flex: 1; display: flex; min-height: 0; }
.qleft { width: 160px; display: flex; flex-direction: column; }
.qleft h2 { height: 20px; padding: 2px 5px; font-weight: normal; border-bottom: 1px solid #cbc6c0; }
.entity { margin: 8px 0 0 10px; border: 1px solid #b9b4ae; height: 220px; display: flex; flex-direction: column; }
.enthead { height: 20px; padding: 3px 4px; background: linear-gradient(#f4f1ee, #e4dfd9); border-bottom: 1px solid #b9b4ae; }
.entrow { padding: 1px 3px; background: #fff; height: 20px; border-bottom: 1px solid #ddd; }
.entbody { flex: 1; background: #fff; }
.hier { margin-top: 10px; height: 17px; padding-left: 10px; border-bottom: 2px solid #5b86b4; }
.qleft .tasktitle { margin-top: 5px; padding-top: 3px; }
.flow { padding: 8px 5px; height: 31px; }
.tasks { margin-left: 5px; border: 1px solid #b9b4ae; border-bottom: 0; height: 181px; overflow: hidden; }
.taskhead { height: 21px; background: #e8e3dd; border-bottom: 1px solid #b9b4ae; }
.task { height: 14px; border-bottom: 1px solid #ccc; background: #fff; padding-left: 4px; }
.qscroll { margin-left: 5px; height: 15px; border: 1px solid #a9a49e; }
.qscroll button { width: 15px; height: 13px; display: grid; place-items: center; border-right: 1px solid #a9a49e; }
.qright { flex: 1; padding-top: 22px; border-right: 1px solid #cbc6c0; border-bottom: 1px solid #cbc6c0; }
.qband { height: 18px; background: #5e8aae; }

.messages { display: flex; height: 106px; }
.msgside { width: 20px; display: flex; flex-direction: column; align-items: center; gap: 5px; padding-top: 3px; border: 1px solid #cbc6c0; }
.msgside button { border: 1px solid #777; }
.msgside span { writing-mode: vertical-rl; transform: rotate(180deg); margin-top: auto; padding-top: 4px; }
.msgmain { flex: 1; min-width: 0; display: flex; flex-direction: column; }
.msgbox { display: grid; grid-template-columns: minmax(0, 1fr) 16px; grid-template-rows: 22px 40px; height: 63px; padding-right: 2px; border-bottom: 2px solid #9b968f; border-top: 1px solid #aaa; }
.msghead { border-bottom: 1px solid #cbc6c0; }
.msgview { grid-row: 2; display: flex; flex-direction: column; background: #fff; min-width: 0; }
.msgtext { flex: 1; display: flex; align-items: flex-start; overflow: hidden; padding: 2px 0 0 12px; white-space: nowrap; }
.msgtext code { font: bold 11px/14px "Liberation Mono", monospace; color: #168216; margin-left: 2px; }
.branch { width: 8px; height: 7px; border-bottom: 1px dotted #aaa; }
.hbar { display: flex; height: 13px; background: #d0cdc5; border: 1px solid #a9a49e; margin-left: 2px; }
.hbar button { width: 13px; display: grid; place-items: center; background: #f0ede9; }
.thumb { width: 74%; display: grid; place-items: center; background: linear-gradient(#faf9f7, #e6e2dd); border: solid #a9a49e; border-width: 0 1px; }
.thumb i { width: 7px; height: 6px; background: repeating-linear-gradient(90deg, #bbb 0 1px, transparent 1px 3px); }
.trough { flex: 1; }
.vbar { grid-column: 2; grid-row: 1 / 3; margin: 2px 2px 13px; display: flex; flex-direction: column; border: 1px solid #a9a49e; background: #f0ede9; }
.vbar button { height: 12px; display: grid; place-items: center; }
.vthumb { flex: 1; border: solid #a9a49e; border-width: 1px 0; background: #faf8f6; }
.tabs { display: flex; height: 16px; }
.tabs button { position: relative; padding: 0 9px; height: 15px; line-height: 15px; }
.tabs button span { position: relative; z-index: 1; }
.tabs button::before, .tabs button::after { content: ""; position: absolute; top: 0; bottom: 0; border: 0 solid #444; border-bottom-width: 1px; }
.tabs button::before { left: 3px; right: 50%; border-left-width: 1px; transform: skewX(22deg); }
.tabs button::after { right: 3px; left: 49%; border-right-width: 1px; transform: skewX(-22deg); }
.tabs .on::before, .tabs .on::after { background: #fff; }
.msgctl { display: flex; align-items: center; gap: 6px; height: 26px; padding-right: 2px; margin-top: 1px; }
.msgctl output { width: 121px; height: 16px; padding-left: 4px; line-height: 14px; border: 1px solid; border-color: #8e8a85 #fff #fff #8e8a85; }
.soft, .combo { height: 22px; border: 1px solid #c5bfb8; border-radius: 2px; background: linear-gradient(#f8f6f4, #ece8e4); }
.soft { width: 30px; display: grid; place-items: center; }
.combo { flex: 1; display: flex; align-items: center; padding: 0 4px; }
.combo select { flex: 1; appearance: none; color: #c0bbb6; opacity: 1; outline: 0; }
.updown { width: 7px; height: 10px; }
.soft.locate { width: 64px; color: #858585; }
.qstatus { height: 17px; display: flex; justify-content: flex-end; padding: 2px 20px 0 0; gap: 5px; }
.clock { margin-left: 14px; }

.sim { position: absolute; left: 29px; right: 73px; top: 15px; bottom: 98px; display: flex; flex-direction: column; background: #d8d8d8; border: 1px solid #bbb; padding: 0 2px 2px; font: 11px/14px "Liberation Sans", sans-serif; box-shadow: inset 0 0 0 2px #ececec; }
.sim > .title { height: 17px; }
.menu { display: flex; align-items: center; }
.menu u { text-underline-offset: 1px; }
.simmenu { height: 21px; padding: 0 4px; gap: 8px; border-bottom: 1px solid #999; background: #d8d8d8; }
.bold { font-weight: bold; }
.help { margin-left: auto; }
.barrow { display: flex; gap: 2px; height: 25px; padding: 1px 0; }
.bar { display: flex; align-items: center; justify-content: space-between; height: 23px; padding: 0 5px 0 4px; border: 1px solid; border-color: #f6f6f6 #999 #999 #f6f6f6; }
.bar::before { content: ""; width: 1px; height: 17px; background: #999; box-shadow: 1px 0 #fff; }
.tool { display: flex; align-items: center; gap: 2px; }
.drop { border: solid transparent; border-width: 3px 2px 0; border-top-color: #222; }
.sep { height: 14px; border-left: 1px dashed #777; }
.raised { border: 1px solid; border-color: #f8f8f8 #888 #888 #f8f8f8; background: #e2e2e2; }
.active { background: #fff; border: 1px solid; border-color: #888 #fff #fff #888; }
.simsecond { display: flex; align-items: center; gap: 1px; height: 25px; padding-left: 11px; border-bottom: 1px solid #999; }
.simthird { height: 25px; padding: 4px 14px; color: #8a8a8a; border-bottom: 1px solid #999; }
.simbody { flex: 1; display: flex; justify-content: space-between; min-height: 0; }
.simleft { width: 70px; display: flex; flex-direction: column; }
.panetitle { height: 17px; display: flex; align-items: center; gap: 3px; padding-left: 2px; }
.inst { height: 15px; display: flex; align-items: center; border: 1px solid #999; }
.inst b { font-weight: normal; margin-left: 4px; }
.caret { border: solid transparent; border-width: 6px 3px 0; border-top-color: #444; margin-left: 2px; }
.tree { flex: 1; background: #fff; padding-top: 2px; }
.node { height: 15px; display: flex; align-items: center; gap: 5px; padding-left: 5px; }
.node.lit { background: #d8d8d8; width: 100%; }
.fold { width: 9px; height: 9px; border: 1px solid #999; background: #fff; font: 9px/6px "Liberation Sans", sans-serif; text-align: center; }
.elbow { margin-left: 19px; width: 8px; height: 12px; border: dotted #888; border-width: 0 0 1px 1px; }
.ball { width: 10px; height: 10px; border-radius: 50%; background: #1748c8; margin-left: -5px; }
.node.deep { padding-left: 19px; }
.mscroll { height: 12px; background: #c4c4c4; border: 1px solid #888; padding-left: 1px; flex: none; }
.simleft .mscroll { margin-bottom: 1px; }
.libtab { height: 19px; display: flex; align-items: center; gap: 3px; padding-left: 4px; margin-top: 1px; background: #aaa; border: 1px solid #444; border-radius: 3px; }
.trans { margin-top: 4px; height: 81px; border: 1px solid #888; }
.log { background: #fff; height: 62px; display: flex; flex-direction: column; line-height: 13px; padding: 0 4px; }
.log code { font: 11px/12px "Liberation Mono", monospace; }
.log .last { margin-top: 9px; }
.simright { width: 13px; display: flex; flex-direction: column; gap: 2px; padding-top: 3px; }
.x { width: 11px; height: 11px; background: #e4e4e4; color: #111; border: 1px solid; border-color: #fff #555 #555 #fff; display: grid; place-items: center; overflow: hidden; flex: none; }
.strip { height: 31px; margin-top: 14px; border: solid #4b568e; border-width: 3px 0 0; background: #dedede; border-bottom: 1px solid #999; }
.navy { flex: 115; background: #4b568e; }
.n { padding-left: 4px; line-height: 14px; border: 1px solid #999; border-width: 1px 0; height: 17px; overflow: hidden; }
.peri { flex: 145; background: #8a9cf4; }
.vmotif { display: flex; flex-direction: column; justify-content: space-between; height: 66px; background: #a0a0a0; border: 1px solid #888; }
.simright .mscroll { margin-bottom: 7px; }
.simstatus { display: flex; align-items: flex-end; height: 20px; gap: 4px; padding: 2px 0 1px; }
.cell { height: 16px; padding: 0 2px; border: 1px solid; border-color: #888 #f4f4f4 #f4f4f4 #888; }
.now { width: 188px; }
.path { width: 479px; }
.simstatus svg { margin-left: auto; }

.wave { position: absolute; left: 70px; right: 89px; top: 76px; bottom: 121px; display: flex; flex-direction: column; border: solid #4b7cbc; border-width: 1px 3px 4px; border-radius: 3px 3px 0 0; background: #d8d8d8; font: 11px/14px "Liberation Sans", sans-serif; }
.blue { background: #5a96df; color: #fff; height: 17px; padding: 0 2px; border-bottom: 1px solid #e4eefa; }
.blue .winbtns { color: #fff; }
.blue .winbtns button { border-color: #6ea4e4; }
.waveinner { flex: 1; min-height: 0; display: flex; flex-direction: column; border: solid #ececec; border-width: 0 1px; padding: 0 1px; }
.wavemenu { height: 22px; gap: 9px; padding-left: 5px; }
.panebar { height: 16px; display: flex; align-items: center; gap: 3px; padding: 0 1px; background: #6571b0; border-top: 1px solid #555; border-bottom: 1px solid #555e94; color: #fff; }
.stripes { flex: 1; height: 8px; background: repeating-linear-gradient(#9ea8e8 0 1px, #3e4a90 1px 2px, #6f7cc4 2px 4px); }
.knurl { width: 16px; height: 8px; background: repeating-conic-gradient(#c8d0f8 0 25%, #4854a0 0 50%) 0 0 / 2px 2px; }
.rows { height: 77px; padding-top: 1px; border-bottom: 1px solid #f4f4f4; }
.field { display: flex; align-items: center; position: relative; }
.field input { width: 50px; height: 15px; background: #fff; text-align: right; padding-right: 2px; border: 1px solid #aaa; outline: 0; }
.field::before { content: ""; position: absolute; left: 19px; top: 2px; width: 1px; height: 11px; background: #000; }
.spin { display: flex; flex-direction: column; }
.spin button { height: 7px; width: 9px; display: grid; place-items: center; border: 1px solid #bbb; overflow: hidden; }
.pane { flex: 1; min-height: 0; display: grid; grid-template-columns: 130px 83px minmax(0, 1fr) 11px; grid-template-rows: 16px minmax(0, 1fr) 34px 10px; gap: 2px; background: #f4f4f4; padding: 1px 1px 1px 0; }
.gray { background: #7f7f7f; color: #fff; min-width: 0; }
.black { background: #000; min-width: 0; }
.head { display: flex; align-items: center; padding: 0 2px 0 8px; gap: 3px; }
.end { justify-content: flex-end; }
.cubes { width: 14px; height: 12px; }
.names { border-left: 8px solid #fff; }
.sig { height: 15px; display: flex; align-items: center; gap: 2px; padding-left: 15px; background: #dcdcdc; border-bottom: 1px solid #8a8a8a; color: #222; white-space: nowrap; }
.sig:first-child { margin-top: 2px; }
.vals .sig { padding-left: 2px; }
.plot svg { width: 100%; height: 100%; }
.vmotif.wide { height: auto; background: #e0e0e0; border: 0; align-items: center; }
.vmotif.wide i { flex: 1; width: 9px; background: linear-gradient(#d4d4d4 29px, #fff 29px); }
.foot { display: flex; flex-direction: column; }
.frow { flex: 1; display: flex; align-items: center; }
.frow > span:last-child { flex: 1; text-align: right; padding-right: 6px; line-height: 17px; white-space: nowrap; }
.frow .white { background: #fff; color: #222; }
.ficons { display: flex; gap: 2px; padding: 0 0 0 8px; width: 42px; }
.ruler { overflow: hidden; }
.ruler svg { width: 100%; height: 6px; }
.times { display: flex; height: 14px; color: #3fae52; line-height: 14px; }
.times span { flex: 0 0 23.8%; text-align: center; white-space: nowrap; }
.times .origin { flex-basis: 11.8%; text-align: left; }
.cursorrow { border-top: 1px solid #777; flex: 1; display: flex; }
.cursorrow span { border: 1px solid #b8a850; color: #eee8b0; padding: 0 1px; line-height: 12px; }
.hmotif { display: flex; align-items: center; background: #aaa; min-width: 0; }
.hmotif i { flex: 1; height: 9px; background: #dadada; border: 1px solid; border-color: #fff #777 #777 #fff; }
.hmotif.first { border-left: 8px solid #7f7f7f; }
.wavestatus { display: flex; align-items: flex-end; height: 20px; }
.range, .rest { height: 19px; padding: 1px 4px; border: 1px solid; border-color: #888 #f4f4f4 #f4f4f4 #888; }
.range { width: 159px; }
.rest { flex: 1; }

.pointer { position: absolute; left: 70px; top: 53px; width: 64px; height: 64px; }
</style>
